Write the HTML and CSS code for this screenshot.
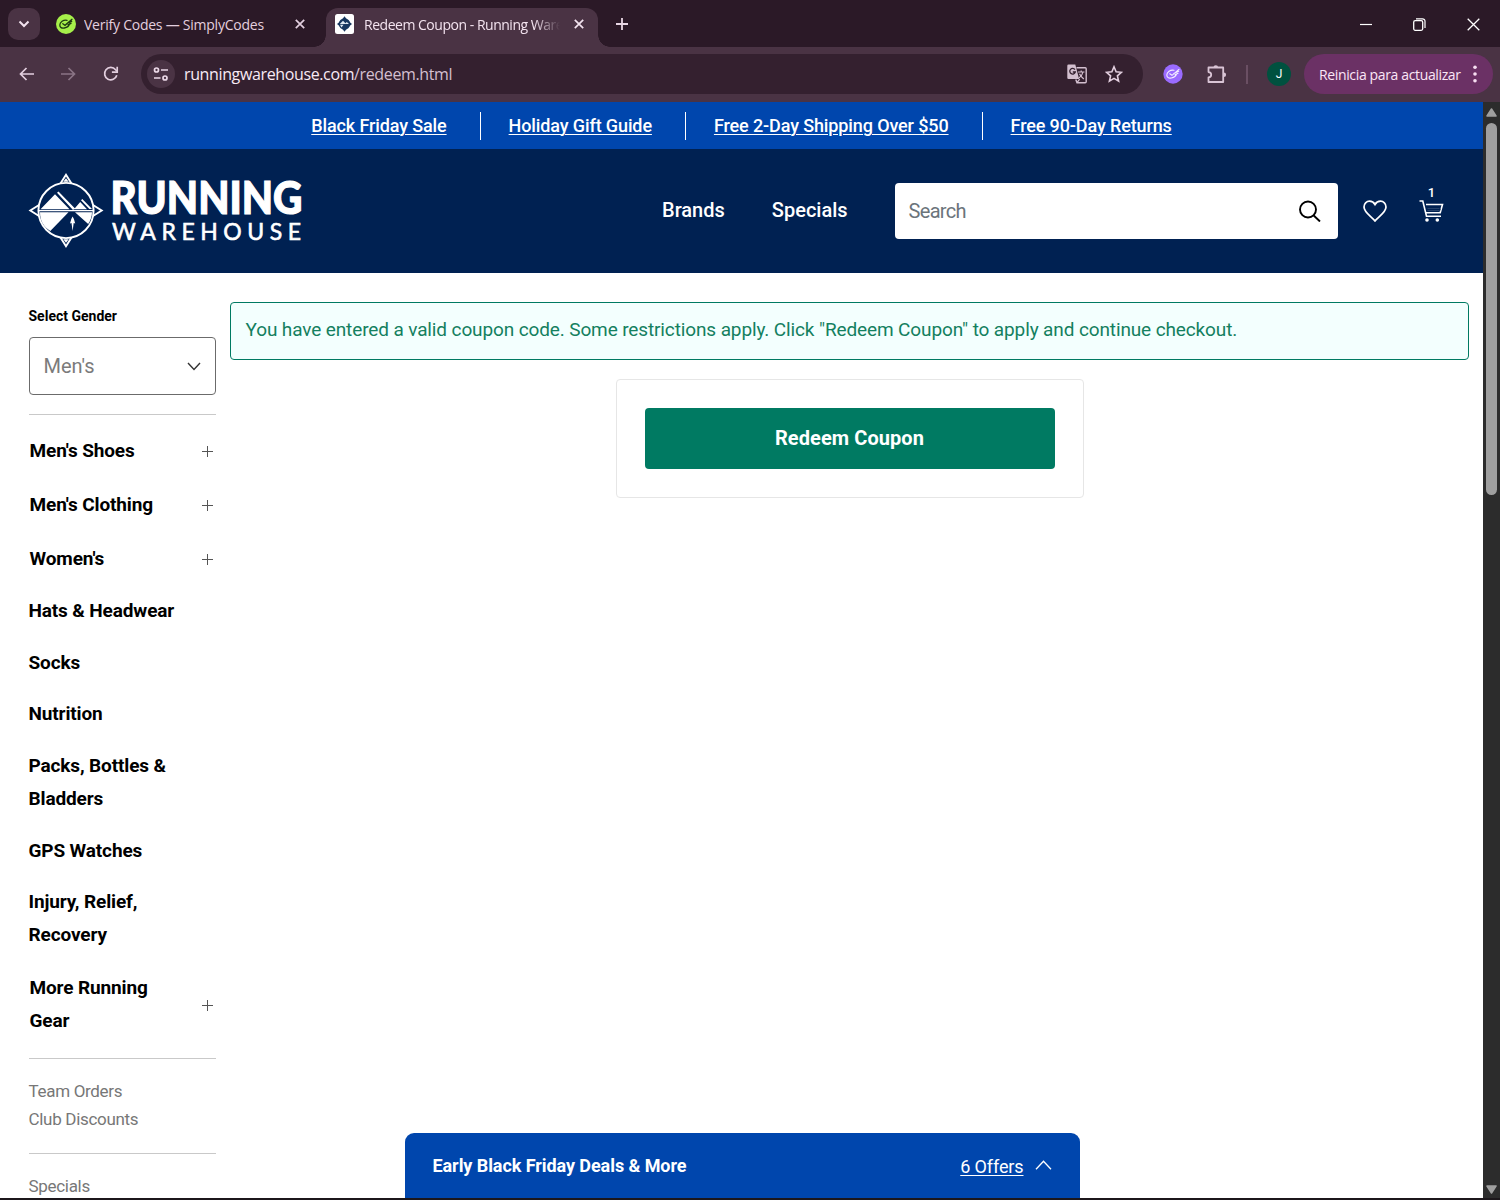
FILE: index.html
```html
<!DOCTYPE html>
<html lang="en">
<head>
    <meta charset="UTF-8">
    <meta name="viewport" content="width=device-width, initial-scale=1.0">
    <title>Redeem Coupon - Running Warehouse</title>
    <link rel="stylesheet" href="styles.css">
</head>
<body>
    <div class="browser">
        <!-- Tab strip -->
        <div class="tab-strip">
            <button class="tab-search" aria-label="Search tabs">
                <svg width="12" height="8" viewBox="0 0 12 8"><path d="M1.500 1.500 6 6l4.500-4.500" fill="none" stroke="#f3e3ef" stroke-width="2"/></svg>
            </button>
            <div class="tab tab-first">
                <svg class="favicon" width="20" height="20" viewBox="0 0 20 20">
                    <circle cx="10" cy="10" r="10" fill="#a6f04a"/>
                    <path d="M11 6.300C7.500 5.500 3.800 8 3.800 11c0 2.500 2 3.500 4.500 3 2.600-.5 4.700-2 5.200-4M6.800 9.700l2.200 1.600L16 5.300M10.800 9.500l4.900-2.200M12 10.800l3-1.500" fill="none" stroke="#1f3a12" stroke-width="1.300" stroke-linecap="round"/>
                </svg>
                <span class="tab-title">Verify Codes — SimplyCodes</span>
                <svg class="tab-close" width="10" height="10" viewBox="0 0 10 10"><path d="M.8.8l8.400 8.400M9.200.8L.8 9.200" stroke="#e3cfdf" stroke-width="1.700"/></svg>
            </div>
            <div class="tab tab-active">
                <svg class="favicon" width="19" height="20" viewBox="0 0 19 20">
                    <rect width="19" height="20" rx="2.500" fill="#fff"/>
                    <circle cx="9.500" cy="10" r="5.800" fill="#17375f"/>
                    <path d="M9.500 2.300 11.500 5h-4zM9.500 17.700 11.500 15h-4zM2 10l2.500-2v4zM17 10l-2.500-2v4z" fill="#17375f"/>
                    <path d="M4.800 10 8 6.800l2.400 2.400 1.400-1.200 2.200 2zM5 10.800h3.500L6.500 13.500z" fill="#dfe9f2"/>
                </svg>
                <span class="tab-title">Redeem Coupon - Running Warehouse</span>
                <svg class="tab-close" width="10" height="10" viewBox="0 0 10 10"><path d="M.8.8l8.400 8.400M9.200.8L.8 9.200" stroke="#f3e3ef" stroke-width="1.700"/></svg>
            </div>
            <svg class="new-tab" width="12" height="12" viewBox="0 0 12 12"><path d="M6 0v12M0 6h12" stroke="#e8d6e4" stroke-width="1.800"/></svg>
            <div class="window-controls">
                <svg width="12" height="12" viewBox="0 0 12 12"><path d="M0 5.500h12" stroke="#fff" stroke-width="1.200"/></svg>
                <svg width="13" height="13" viewBox="0 0 13 13"><rect x=".7" y="2.700" width="9" height="9.600" rx="1.500" fill="none" stroke="#fff" stroke-width="1.300"/><path d="M3 .8h6.500a2.500 2.500 0 0 1 2.500 2.500V10" fill="none" stroke="#fff" stroke-width="1.200"/></svg>
                <svg width="13" height="13" viewBox="0 0 13 13"><path d="M.7.7l11.600 11.600M12.300.7L.7 12.300" stroke="#fff" stroke-width="1.300"/></svg>
            </div>
        </div>

        <!-- Toolbar -->
        <div class="toolbar">
            <svg class="nav-back" width="16" height="14" viewBox="0 0 16 14"><path d="M15 7H2M7.500 1 1.500 7l6 6" fill="none" stroke="#e3cfdf" stroke-width="1.700"/></svg>
            <svg class="nav-forward" width="16" height="14" viewBox="0 0 16 14"><path d="M1 7h13M8.500 1l6 6-6 6" fill="none" stroke="#8a7485" stroke-width="1.700"/></svg>
            <svg class="nav-reload" width="16" height="16" viewBox="0 0 16 16"><path d="M13.800 9.300A6.200 6.200 0 1 1 12.600 3.700L14 5.300" fill="none" stroke="#e3cfdf" stroke-width="1.700"/><path d="M14.200.8v5.400H8.900" fill="none" stroke="#e3cfdf" stroke-width="1.700"/></svg>
            <div class="omnibox">
                <span class="site-info">
                    <svg width="16" height="14" viewBox="0 0 16 14" fill="none" stroke="#ecd9e8" stroke-width="1.700"><circle cx="3.500" cy="3" r="2"/><path d="M8 3h7M1 11h6.500"/><circle cx="12" cy="11" r="2"/></svg>
                </span>
                <span class="url">runningwarehouse.com<span class="url-path">/redeem.html</span></span>
                <svg class="translate" width="20" height="20" viewBox="0 0 20 20">
                    <path d="M1.500.5h6.800l3.800 14.500H1.500A1.200 1.200 0 0 1 .3 13.800V1.700A1.200 1.200 0 0 1 1.500.5z" fill="#d3bfcf"/>
                    <path d="M7.900 5.600A2.800 2.800 0 1 0 8.300 8H5.800" fill="none" stroke="#34202f" stroke-width="1.300"/>
                    <path d="M9.500 3.700h8.700c.6 0 1 .4 1 1v13.100c0 .6-.4 1-1 1H10L8.800 15.500" fill="none" stroke="#d3bfcf" stroke-width="1.400"/>
                    <path d="M11 8h6.500M14.200 6.500V8M16 8c-.5 2.500-2 4.500-4 6M12.500 9.800c.8 1.800 2.300 3.500 4.300 5.200M10 18.500l2.700-3.300" fill="none" stroke="#d3bfcf" stroke-width="1.200"/>
                </svg>
                <svg class="star" width="18" height="18" viewBox="0 0 18 18"><path d="M9 1.800l2.100 5 5.300.5-4 3.600 1.200 5.300L9 13.400l-4.600 2.800 1.200-5.300-4-3.600 5.300-.5z" fill="none" stroke="#e3cfdf" stroke-width="1.600"/></svg>
            </div>
            <svg class="ext-codes" width="20" height="20" viewBox="0 0 20 20">
                <circle cx="10" cy="10" r="9.700" fill="#9a6bff"/>
                <path d="M11 6.300C7.500 5.500 3.800 8 3.800 11c0 2.500 2 3.500 4.500 3 2.600-.5 4.700-2 5.200-4M6.800 9.700l2.200 1.600L16 5.300M10.800 9.500l4.900-2.200M12 10.800l3-1.500" fill="none" stroke="#f4edff" stroke-width="1.100" stroke-linecap="round"/>
            </svg>
            <svg class="ext-puzzle" width="20" height="20" viewBox="0 0 20 20"><path d="M1.500 3.500H16.200V18H1.500v-4.500c3.600-.4 3.600-5 0-5.500z" fill="none" stroke="#d9c4d5" stroke-width="1.800" stroke-linejoin="round"/><path d="M6.500 3.500a2.300 2.300 0 0 1 4.600 0zM16.800 8.500a2.300 2.300 0 0 1 0 4.600z" fill="#d9c4d5"/></svg>
            <span class="toolbar-divider"></span>
            <span class="avatar">J</span>
            <button class="update-btn">
                <span>Reinicia para actualizar</span>
                <svg width="4" height="18" viewBox="0 0 4 18" fill="#f7dff2"><circle cx="2" cy="2.300" r="1.800"/><circle cx="2" cy="9" r="1.800"/><circle cx="2" cy="15.700" r="1.800"/></svg>
            </button>
        </div>

        <div class="viewport">
            <div class="page">
                <div class="promo-bar">
                    <a href="#">Black Friday Sale</a>
                    <a href="#">Holiday Gift Guide</a>
                    <a href="#">Free 2-Day Shipping Over $50</a>
                    <a href="#">Free 90-Day Returns</a>
                </div>

                <header class="site-header">
                    <svg class="logo" width="276" height="78" viewBox="0 0 276 78">
                        <g fill="none" stroke="#fff" stroke-width="1.900">
                            <circle cx="38" cy="38.500" r="27.600"/>
                            <path d="M32.500 11.500 38 2.700l5.500 8.800M32.500 65.500 38 74.300l5.500-8.800M11 33 2.300 38.500 11 44M65 33l8.700 5.500L65 44"/>
                        </g>
                        <path d="M35.300 9.800 38 6.300l2.700 3.500zM35.300 67.200 38 70.700l2.700-3.500z" fill="#fff"/>
                        <path d="M12.500 37.200 27 22.200 41.500 37.200zM46 37.200l6.200-7.200 6.800 7.200zM29 20.800l1.500-1.300L47 36.500l-2 1.500zM53 28.200l1.300-1.200L64 37h-2.700z" fill="#fff"/>
                        <path d="M10.500 38.600h55" stroke="#fff" stroke-width="1.200"/>
                        <path d="M12 40.300h28.500L22.300 59C15.500 55 12 49 12 40.300zM47 40.300H64c0 4.500-1.500 8.500-3.800 11.700zM44.600 44.500l1.300 2.500 1.300 4.500-1.500-.5L44.600 59l-1.100-8-1.500.5 1.300-4.500z" fill="#fff"/>
                        <text class="logo-main" x="82.500" y="42.200" textLength="192" lengthAdjust="spacingAndGlyphs">RUNNING</text>
                        <text class="logo-sub" x="84" y="67.800" textLength="189">WAREHOUSE</text>
                    </svg>
                    <nav class="main-nav">
                        <a href="#">Brands</a>
                        <a href="#">Specials</a>
                    </nav>
                    <div class="search-box">
                        <span>Search</span>
                        <svg width="22" height="22" viewBox="0 0 22 22" fill="none" stroke="#000" stroke-width="1.900"><circle cx="9" cy="9.500" r="8"/><path d="M14.700 15.500l6.300 6"/></svg>
                    </div>
                    <svg class="heart" width="24" height="22" viewBox="0 0 24 22"><path d="M12 21C8.500 16.500 1 12.500 1 7 1 3.700 3.500 1.200 6.500 1.200 9 1.200 11 2.700 12 4.500c1-1.800 3-3.300 5.500-3.300C20.500 1.200 23 3.700 23 7c0 5.500-7.500 9.500-11 14z" fill="none" stroke="#fff" stroke-width="1.700"/></svg>
                    <div class="cart">
                        <span class="cart-count">1</span>
                        <svg width="25" height="22" viewBox="0 0 25 22"><path d="M.5 1h3.300l3.700 15.200h14.500M7 4.500h16.500l-2.300 8.300H7M8.500 9.500h12" fill="none" stroke="#fff" stroke-width="1.600"/><path d="M7.500 9.500h14" stroke="#002152" stroke-width="1.800"/><circle cx="8" cy="20" r="1.800" fill="#fff"/><circle cx="18.300" cy="20" r="1.800" fill="#fff"/></svg>
                    </div>
                </header>

                <div class="content">
                    <aside class="sidebar">
                        <div class="gender-label">Select Gender</div>
                        <div class="gender-select">
                            <span>Men's</span>
                            <svg width="14" height="9" viewBox="0 0 14 9"><path d="M1 1l6 6.500L13 1" fill="none" stroke="#333" stroke-width="1.400"/></svg>
                        </div>
                        <ul class="category-list">
                            <li class="has-children"><a href="#">Men's Shoes</a><span class="plus"></span></li>
                            <li class="has-children"><a href="#">Men's Clothing</a><span class="plus"></span></li>
                            <li class="has-children"><a href="#">Women's</a><span class="plus"></span></li>
                            <li><a href="#">Hats &amp; Headwear</a></li>
                            <li><a href="#">Socks</a></li>
                            <li><a href="#">Nutrition</a></li>
                            <li><a href="#">Packs, Bottles &amp; Bladders</a></li>
                            <li><a href="#">GPS Watches</a></li>
                            <li><a href="#">Injury, Relief, Recovery</a></li>
                            <li class="has-children"><a href="#">More Running Gear</a><span class="plus"></span></li>
                        </ul>
                        <ul class="link-list">
                            <li><a href="#">Team Orders</a></li>
                            <li><a href="#">Club Discounts</a></li>
                        </ul>
                        <ul class="link-list">
                            <li><a href="#">Specials</a></li>
                        </ul>
                    </aside>
                    <main class="main">
                        <div class="alert-success">You have entered a valid coupon code. Some restrictions apply. Click "Redeem Coupon" to apply and continue checkout.</div>
                        <div class="coupon-card">
                            <button class="redeem-btn">Redeem Coupon</button>
                        </div>
                    </main>
                </div>

                <div class="offers-bar">
                    <span class="offers-title">Early Black Friday Deals &amp; More</span>
                    <a class="offers-link" href="#">6 Offers</a>
                    <svg width="17" height="10" viewBox="0 0 17 10"><path d="M1 9.300l7.500-8 7.500 8" fill="none" stroke="#fff" stroke-width="1.300"/></svg>
                </div>
            </div>
            <div class="scrollbar">
                <svg width="11" height="9" viewBox="0 0 11 9"><path d="M5.500 1 10 8H1z" fill="#9f9f9f" stroke="#9f9f9f" stroke-width="1.500" stroke-linejoin="round"/></svg>
                <div class="scroll-thumb"></div>
                <svg class="scroll-down" width="11" height="9" viewBox="0 0 11 9"><path d="M5.500 8 10 1H1z" fill="#9f9f9f" stroke="#9f9f9f" stroke-width="1.500" stroke-linejoin="round"/></svg>
            </div>
        </div>
    </div>
</body>
</html>
```

FILE: styles.css
```css
* {
    box-sizing: border-box;
}

body {
    margin: 0;
    font-family: Roboto, sans-serif;
    background: #fff;
    overflow: hidden;
}

a {
    color: inherit;
    text-decoration: none;
}

ul {
    list-style: none;
    margin: 0;
    padding: 0;
}

button {
    border: none;
    padding: 0;
    font-family: inherit;
}

svg {
    display: block;
    flex-shrink: 0;
}

.browser {
    width: 1500px;
    height: 1200px;
    display: flex;
    flex-direction: column;
    background: #4a3344;
    border-bottom: 2px solid #1c171b;
}

/* Tab strip */
.tab-strip {
    height: 47px;
    display: flex;
    align-items: flex-start;
    background: #2b1927;
    font-family: "Open Sans", sans-serif;
    font-size: 14px;
    color: #e3cfdf;
}

.tab-search {
    width: 32px;
    height: 32px;
    margin: 8px 0 0 8px;
    border-radius: 10px;
    background: #4a3344;
    display: flex;
    align-items: center;
    justify-content: center;
}

.tab {
    display: flex;
    align-items: center;
    height: 39px;
    margin-top: 8px;
    padding-bottom: 7px;
}

.tab-first {
    width: 286px;
    padding-left: 16px;
}

.tab-first .tab-title {
    letter-spacing: -0.24px;
    width: 202px;
}

.tab-title {
    margin-left: 8px;
    white-space: nowrap;
    overflow: hidden;
}

.tab-close {
    margin-left: 9px;
}

.tab-active {
    position: relative;
    width: 272px;
    padding-left: 9px;
    border-radius: 12px 12px 0 0;
    background: #4a3344;
    color: #f3e3ef;
}

.tab-active::before,
.tab-active::after {
    content: "";
    position: absolute;
    bottom: 0;
    width: 12px;
    height: 12px;
}

.tab-active::before {
    left: -12px;
    background: radial-gradient(circle at 0 0, transparent 11.5px, #4a3344 12px);
}

.tab-active::after {
    right: -12px;
    background: radial-gradient(circle at 100% 0, transparent 11.5px, #4a3344 12px);
}

.tab-active .tab-title {
    width: 196px;
    margin-left: 10px;
    letter-spacing: -0.48px;
    -webkit-mask-image: linear-gradient(to right, #000 170px, transparent 196px);
    mask-image: linear-gradient(to right, #000 170px, transparent 196px);
}

.tab-active .tab-close {
    margin-left: 14px;
}

.new-tab {
    margin: 18px 0 0 18px;
}

.window-controls {
    display: flex;
    align-items: center;
    gap: 41px;
    margin: 18px 20px 0 auto;
}

/* Toolbar */
.toolbar {
    height: 55px;
    display: flex;
    align-items: center;
    padding: 0 7px 1px 19px;
    background: #4a3344;
    font-family: "Open Sans", sans-serif;
}

.nav-forward {
    margin-left: 25px;
}

.nav-reload {
    margin-left: 27px;
}

.omnibox {
    width: 1002px;
    height: 40px;
    margin-left: 22px;
    padding: 0 20px 0 6px;
    border-radius: 20px;
    background: #34202f;
    display: flex;
    align-items: center;
}

.site-info {
    width: 28px;
    height: 28px;
    border-radius: 50%;
    background: #4a3344;
    display: flex;
    align-items: center;
    justify-content: center;
}

.url {
    margin-left: 9px;
    font-size: 16px;
    letter-spacing: -0.37px;
    color: #f8eaf5;
}

.url-path {
    color: #d3bfcf;
}

.translate {
    margin-left: auto;
}

.star {
    margin-left: 18px;
}

.ext-codes {
    margin-left: 20px;
}

.ext-puzzle {
    margin-left: 24px;
}

.toolbar-divider {
    width: 2px;
    height: 19px;
    margin-left: 19px;
    background: #6a4f63;
}

.avatar {
    width: 24px;
    height: 24px;
    margin-left: 19px;
    border-radius: 50%;
    background: #00513f;
    color: #fff;
    font-family: Roboto, sans-serif;
    font-size: 12px;
    line-height: 24px;
    text-align: center;
}

.update-btn {
    width: 189px;
    height: 40px;
    margin-left: auto;
    padding: 0 16px 0 15px;
    border-radius: 20px;
    background: #6b3165;
    color: #fbe6f7;
    font-size: 14px;
    letter-spacing: -0.36px;
    white-space: nowrap;
    display: flex;
    align-items: center;
    justify-content: space-between;
}

/* Page */
.viewport {
    height: 1096px;
    display: flex;
}

.page {
    position: relative;
    width: 1483px;
    height: 1096px;
    background: #fff;
    overflow: hidden;
}

.scrollbar {
    width: 17px;
    padding: 6px 3px 4px;
    background: #2c2c2c;
    display: flex;
    flex-direction: column;
}

.scroll-thumb {
    height: 372px;
    margin-top: 6px;
    border-radius: 6px;
    background: #9f9f9f;
}

.scroll-down {
    margin-top: auto;
}

.promo-bar {
    height: 47px;
    display: flex;
    align-items: center;
    justify-content: center;
    background: #0046ad;
    color: #fff;
    font-size: 18px;
    font-weight: 500;
    letter-spacing: -0.12px;
}

.promo-bar a {
    padding: 0 33px 0 28px;
    line-height: 28px;
    border-right: 1px solid #fff;
    text-decoration: underline;
    text-underline-offset: 2px;
    text-decoration-thickness: 1px;
}

.promo-bar a:last-child {
    border-right: none;
    padding-right: 28px;
}

.site-header {
    height: 124px;
    display: flex;
    align-items: center;
    padding: 0 39px 0 28px;
    background: #002152;
    color: #fff;
}

.logo {
    overflow: visible;
}

.logo-main {
    font-family: Lato, sans-serif;
    font-weight: 900;
    font-size: 45px;
    fill: #fff;
    stroke: #fff;
    stroke-width: 1.2px;
}

.logo-sub {
    font-family: Lato, sans-serif;
    font-weight: 400;
    font-size: 23px;
    fill: #fff;
    stroke: #fff;
    stroke-width: 0.6px;
}

.main-nav {
    display: flex;
    gap: 47px;
    margin-left: 358px;
    font-size: 20px;
    font-weight: 500;
    line-height: 22px;
    padding-bottom: 2px;
}

.search-box {
    width: 443px;
    height: 56px;
    margin-left: 47px;
    padding: 0 17px 0 14px;
    border-radius: 4px;
    background: #fff;
    color: #6b747b;
    font-size: 20px;
    letter-spacing: -0.7px;
    display: flex;
    align-items: center;
    justify-content: space-between;
}

.heart {
    margin-left: 25px;
}

.cart {
    margin-left: auto;
    padding-bottom: 15px;
    display: flex;
    flex-direction: column;
    align-items: center;
}

.cart-count {
    font-size: 13px;
    font-weight: 500;
    line-height: 15px;
}

.content {
    display: flex;
    padding: 29px 14px 0 28.5px;
}

.sidebar {
    width: 187.5px;
    margin-right: 14px;
}

.gender-label {
    font-size: 14px;
    font-weight: 700;
    line-height: 29px;
    height: 35px;
}

.gender-select {
    height: 58px;
    padding: 0 14px 0 14px;
    border: 1px solid #6b6b6b;
    border-radius: 4px;
    color: #7b7b7b;
    font-size: 20px;
    display: flex;
    align-items: center;
    justify-content: space-between;
}

.category-list {
    margin-top: 19px;
    padding: 8px 0 10px;
    border-top: 1px solid #c9c9c9;
    border-bottom: 1px solid #c9c9c9;
    font-size: 19px;
    font-weight: 700;
    line-height: 33px;
    letter-spacing: -0.13px;
}

.category-list li {
    padding: 9.3px 30px 9.3px 0;
}

.category-list .has-children {
    display: flex;
    align-items: center;
    justify-content: space-between;
    padding: 10.5px 3px 10.5px 1px;
}

.has-children a {
    max-width: 130px;
}

.plus {
    width: 11px;
    height: 11px;
    margin-top: 2px;
    background: linear-gradient(#555, #555) center / 11px 1px no-repeat, linear-gradient(#555, #555) center / 1px 11px no-repeat;
}

.link-list {
    padding: 18px 0 20px;
    border-bottom: 1px solid #c9c9c9;
    color: #777;
    font-size: 17px;
    line-height: 28px;
    letter-spacing: -0.31px;
}

.main {
    flex: 1;
}

.alert-success {
    height: 58px;
    padding-left: 14.5px;
    border: 1px solid #007a62;
    border-radius: 4px;
    background: #f3fffe;
    color: #14805f;
    font-size: 19px;
    line-height: 54px;
    letter-spacing: -0.122px;
    white-space: nowrap;
}

.coupon-card {
    width: 468px;
    margin: 19px auto 0;
    padding: 28px;
    border: 1px solid #e6e6e6;
    border-radius: 4px;
}

.redeem-btn {
    display: block;
    width: 100%;
    height: 61px;
    padding-bottom: 2px;
    border-radius: 4px;
    background: #007a62;
    color: #fff;
    font-size: 20px;
    font-weight: 700;
    letter-spacing: 0.07px;
    cursor: pointer;
}

/* Sticky offers drawer pinned to the bottom of the page */
.offers-bar {
    position: absolute;
    left: 404.5px;
    bottom: 0;
    width: 675px;
    height: 65px;
    padding: 0 28px 1px 28px;
    border-radius: 9px 9px 0 0;
    background: #0046ad;
    color: #fff;
    font-size: 18px;
    display: flex;
    align-items: center;
}

.offers-title {
    font-weight: 700;
    letter-spacing: -0.07px;
}

.offers-link {
    margin: 2px 11px 0 auto;
    letter-spacing: -0.12px;
    text-decoration: underline;
    text-underline-offset: 2px;
}
```
